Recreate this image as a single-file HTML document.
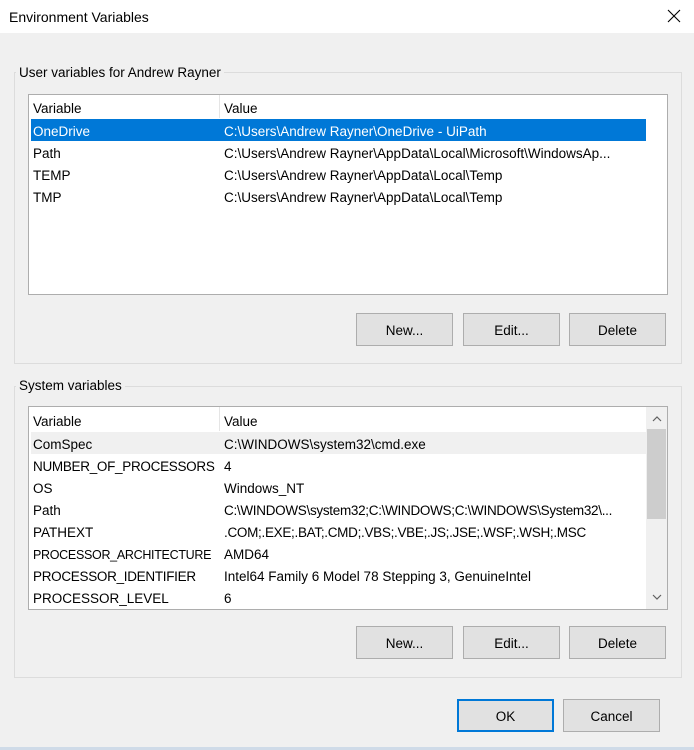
<!DOCTYPE html>
<html><head><meta charset="utf-8"><style>
*{margin:0;padding:0;box-sizing:border-box}
body{width:694px;height:750px;background:#f0f0f0;font-family:"Liberation Sans",sans-serif;font-size:13.5px;color:#000;position:relative;overflow:hidden}
.a{position:absolute;white-space:nowrap}
.title{left:0;top:0;width:694px;height:33px;background:#fff}
.gb{border:1px solid #dcdcdc}
.lbl{background:#f0f0f0;padding:0 3px}
.lv{background:#fff;border:1px solid #adadad}
.btn{background:#e1e1e1;border:1px solid #adadad;text-align:center;line-height:31px;height:33px;width:97px;padding-top:1px}
.row{height:22px;line-height:22px;margin-top:2px}
.n{letter-spacing:-0.3px}
</style></head><body>
<div class="a title"></div>
<div class="a" style="left:9px;top:9px;font-size:14px">Environment Variables</div>
<svg class="a" style="left:667px;top:9px" width="14" height="14"><path d="M1 1L13 13M13 1L1 13" stroke="#000" stroke-width="1.1"/></svg>
<div class="a" style="left:0;top:747px;width:694px;height:3px;background:#cfdbe8"></div>

<div class="a gb" style="left:14px;top:72px;width:668px;height:292px"></div>
<div class="a lbl" style="left:16px;top:65px">User variables for Andrew Rayner</div>
<div class="a lv" style="left:28px;top:94px;width:640px;height:201px"></div>
<div class="a" style="left:219px;top:95px;width:1px;height:23px;background:#e5e5e5"></div>
<div class="a row" style="left:33px;top:96px">Variable</div>
<div class="a row" style="left:224px;top:96px">Value</div>
<div class="a" style="left:31px;top:119px;width:615px;height:22px;background:#0078d7"></div>
<div class="a row" style="left:33px;top:119px;color:#fff">OneDrive</div>
<div class="a row" style="left:224px;top:119px;color:#fff">C:\Users\Andrew Rayner\OneDrive - UiPath</div>
<div class="a row" style="left:33px;top:141px">Path</div>
<div class="a row" style="left:224px;top:141px">C:\Users\Andrew Rayner\AppData\Local\Microsoft\WindowsAp...</div>
<div class="a row" style="left:33px;top:163px">TEMP</div>
<div class="a row" style="left:224px;top:163px">C:\Users\Andrew Rayner\AppData\Local\Temp</div>
<div class="a row" style="left:33px;top:185px">TMP</div>
<div class="a row" style="left:224px;top:185px">C:\Users\Andrew Rayner\AppData\Local\Temp</div>
<div class="a btn" style="left:356px;top:313px">New...</div>
<div class="a btn" style="left:463px;top:313px">Edit...</div>
<div class="a btn" style="left:569px;top:313px">Delete</div>

<div class="a gb" style="left:14px;top:386px;width:668px;height:292px"></div>
<div class="a lbl" style="left:16px;top:378px">System variables</div>
<div class="a lv" style="left:28px;top:406px;width:640px;height:204px"></div>
<div class="a" style="left:219px;top:407px;width:1px;height:24px;background:#e5e5e5"></div>
<div class="a" style="left:646px;top:407px;width:21px;height:202px;background:#f0f0f0"></div>
<div class="a" style="left:647px;top:429px;width:19px;height:90px;background:#cdcdcd"></div>
<svg class="a" style="left:652px;top:415px" width="10" height="8"><path d="M1 6L5 2L9 6" stroke="#606060" fill="none" stroke-width="1.2"/></svg>
<svg class="a" style="left:652px;top:593px" width="10" height="8"><path d="M1 2L5 6L9 2" stroke="#606060" fill="none" stroke-width="1.2"/></svg>
<div class="a" style="left:31px;top:432px;width:615px;height:22px;background:#f0f0f0"></div>
<div class="a row" style="left:33px;top:409px">Variable</div>
<div class="a row" style="left:224px;top:409px">Value</div>
<div class="a row" style="left:33px;top:432px">ComSpec</div><div class="a row" style="left:224px;top:432px">C:\WINDOWS\system32\cmd.exe</div>
<div class="a row n" style="left:33px;top:454px">NUMBER_OF_PROCESSORS</div><div class="a row" style="left:224px;top:454px">4</div>
<div class="a row" style="left:33px;top:476px">OS</div><div class="a row" style="left:224px;top:476px">Windows_NT</div>
<div class="a row" style="left:33px;top:498px">Path</div><div class="a row n" style="left:224px;top:498px">C:\WINDOWS\system32;C:\WINDOWS;C:\WINDOWS\System32\...</div>
<div class="a row" style="left:33px;top:520px">PATHEXT</div><div class="a row n" style="left:224px;top:520px">.COM;.EXE;.BAT;.CMD;.VBS;.VBE;.JS;.JSE;.WSF;.WSH;.MSC</div>
<div class="a row" style="left:33px;top:542px;font-size:12.5px;letter-spacing:-0.3px">PROCESSOR_ARCHITECTURE</div><div class="a row" style="left:224px;top:542px">AMD64</div>
<div class="a row n" style="left:33px;top:564px">PROCESSOR_IDENTIFIER</div><div class="a row" style="left:224px;top:564px">Intel64 Family 6 Model 78 Stepping 3, GenuineIntel</div>
<div class="a row" style="left:33px;top:586px">PROCESSOR_LEVEL</div><div class="a row" style="left:224px;top:586px">6</div>
<div class="a btn" style="left:356px;top:626px">New...</div>
<div class="a btn" style="left:463px;top:626px">Edit...</div>
<div class="a btn" style="left:569px;top:626px">Delete</div>

<div class="a btn" style="left:457px;top:699px;border:2px solid #0078d7;line-height:29px">OK</div>
<div class="a btn" style="left:563px;top:699px">Cancel</div>
</body></html>
